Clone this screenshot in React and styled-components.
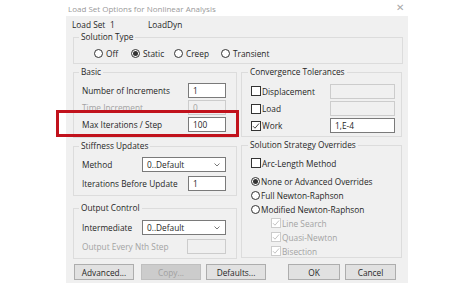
import React from 'react';
import styled, { createGlobalStyle } from 'styled-components';

const GlobalStyle = createGlobalStyle`
  body {
    margin: 0;
    background: #ffffff;
    font-family: "Open Sans", "Noto Sans", sans-serif;
  }
`;

const Page = styled.div`
  position: relative;
  width: 474px;
  height: 283px;
  overflow: hidden;
  background: #ffffff;
`;

const Dialog = styled.div`
  width: 342px;
  margin-left: 66px;
  display: flex;
  flex-direction: column;
`;

const TitleBar = styled.div`
  height: 16px;
  display: flex;
  align-items: center;
  justify-content: space-between;
  padding: 0 4px 0 2px;
  background: #ffffff;
  color: #9a9a9a;
  font-size: 8px;
`;

const Close = styled.span`
  color: #a8a8a8;
  font-size: 10px;
  line-height: 1;
  margin-top: -3px;
`;

const Body = styled.div`
  height: 267px;
  background: #f0f0f0;
  padding: 2px 5px 0 7px;
  box-sizing: border-box;
  font-size: 8.3px;
  color: #262626;
`;

const TopLine = styled.div`
  height: 12px;
  display: grid;
  grid-template-columns: 38px 38px auto;
  align-items: center;
  margin-left: -1px;
`;

const Group = styled.fieldset`
  margin: ${(p) => p.$mt || 0}px 0 0 0;
  padding: 0 ${(p) => p.$pr || 10}px 0 ${(p) => p.$pl || 8}px;
  height: ${(p) => p.$h}px;
  box-sizing: border-box;
  border: 1px solid #dcdcdc;
  min-width: 0;
  display: flex;
  flex-direction: column;
`;

const Legend = styled.legend`
  font-size: 8.3px;
  line-height: 12px;
  padding: 0 2px;
  margin-left: -3px;
  color: #262626;
`;

const RadioLine = styled.div`
  display: flex;
  align-items: center;
  padding: 3px 0 0 12px;
`;

const Option = styled.label`
  display: flex;
  align-items: center;
  gap: ${(p) => p.$gap ?? 1}px;
  width: ${(p) => (p.$w ? `${p.$w}px` : 'auto')};
  height: ${(p) => p.$h || 14}px;
  color: ${(p) => (p.$disabled ? '#a3a3a3' : '#262626')};
  margin-left: ${(p) => p.$indent || 0}px;
  margin-top: ${(p) => p.$mt || 0}px;
`;

const RadioCircle = styled.span`
  width: 9px;
  height: 9px;
  flex: none;
  border-radius: 50%;
  border: 1px solid #333333;
  background: #ffffff;
  box-sizing: border-box;
  display: flex;
  align-items: center;
  justify-content: center;
  &::after {
    content: '';
    width: 5px;
    height: 5px;
    border-radius: 50%;
    background: ${(p) => (p.$on ? '#333333' : 'transparent')};
  }
`;

const Box = styled.span`
  width: 10px;
  height: 10px;
  flex: none;
  border: 1px solid ${(p) => (p.$disabled ? '#cccccc' : '#333333')};
  background: #ffffff;
  box-sizing: border-box;
  display: flex;
  align-items: center;
  justify-content: center;
`;

const Columns = styled.div`
  display: grid;
  grid-template-columns: 164px 161px;
  gap: 4px;
  margin-top: 2px;
`;

const Column = styled.div`
  display: flex;
  flex-direction: column;
`;

const Rows = styled.div`
  display: flex;
  flex-direction: column;
  gap: ${(p) => p.$gap || 0}px;
  padding-top: ${(p) => p.$pt || 4}px;
`;

const Row = styled.div`
  height: ${(p) => p.$h || 17}px;
  display: flex;
  align-items: center;
  justify-content: space-between;
  color: ${(p) => (p.$disabled ? '#a3a3a3' : '#262626')};
`;

const Field = styled.div`
  width: ${(p) => p.$w}px;
  height: 15px;
  box-sizing: border-box;
  border: 1px solid ${(p) => (p.$disabled ? '#cccccc' : '#7a7a7a')};
  background: ${(p) => (p.$disabled ? '#f0f0f0' : '#ffffff')};
  color: ${(p) => (p.$disabled ? '#a3a3a3' : '#262626')};
  display: flex;
  align-items: center;
  padding-left: 4px;
`;

const Select = styled(Field)`
  justify-content: space-between;
  padding-right: 5px;
`;

const Buttons = styled.div`
  display: flex;
  align-items: center;
  margin: 5px 0 0 1px;
`;

const Button = styled.div`
  width: ${(p) => p.$w}px;
  height: 16px;
  margin-left: ${(p) => p.$ml || 0}px;
  box-sizing: border-box;
  border: 1px solid ${(p) => (p.$disabled ? '#bfbfbf' : '#adadad')};
  background: ${(p) => (p.$disabled ? '#cccccc' : '#e1e1e1')};
  color: ${(p) => (p.$disabled ? '#a0a0a0' : '#262626')};
  display: flex;
  align-items: center;
  justify-content: center;
`;

const Highlight = styled.div`
  position: absolute;
  left: 56px;
  top: 110px;
  width: 183px;
  height: 27px;
  box-sizing: border-box;
  border: 3px solid #c1121c;
`;

const Check = ({ color = '#333333' }) => (
  <svg width="8" height="8" viewBox="0 0 8 8">
    <path d="M1 4.2 L3 6.2 L7 1.5" fill="none" stroke={color} strokeWidth="0.9" />
  </svg>
);

const Chevron = () => (
  <svg width="6" height="4" viewBox="0 0 6 4">
    <path d="M0.5 0.5 L3 3 L5.5 0.5" fill="none" stroke="#555555" strokeWidth="0.8" />
  </svg>
);

const Radio = ({ on, label, ...rest }) => (
  <Option {...rest}>
    <RadioCircle $on={on} />
    {label}
  </Option>
);

const CheckOption = ({ checked, disabled, label, ...rest }) => (
  <Option $disabled={disabled} {...rest}>
    <Box $disabled={disabled}>{checked && <Check color={disabled ? '#bbbbbb' : '#333333'} />}</Box>
    {label}
  </Option>
);

export default function App() {
  return (
    <Page>
      <GlobalStyle />
      <Dialog>
        <TitleBar>
          <span>Load Set Options for Nonlinear Analysis</span>
          <Close>✕</Close>
        </TitleBar>
        <Body>
          <TopLine>
            <span>Load Set</span>
            <span>1</span>
            <span>LoadDyn</span>
          </TopLine>
          <Group $h={33} $mt={1}>
            <Legend>Solution Type</Legend>
            <RadioLine>
              <Radio label="Off" $gap={3} $w={37} />
              <Radio on label="Static" $gap={3} $w={43} />
              <Radio label="Creep" $gap={3} $w={47} />
              <Radio label="Transient" $gap={3} />
            </RadioLine>
          </Group>
          <Columns>
            <Column>
              <Group $h={72}>
                <Legend>Basic</Legend>
                <Rows>
                  <Row>
                    Number of Increments
                    <Field $w={38}>1</Field>
                  </Row>
                  <Row $disabled>
                    Time Increment
                    <Field $w={38} $disabled>0</Field>
                  </Row>
                  <Row>
                    Max Iterations / Step
                    <Field $w={38}>100</Field>
                  </Row>
                </Rows>
              </Group>
              <Group $h={56} $mt={2}>
                <Legend>Stiffness Updates</Legend>
                <Rows $gap={2}>
                  <Row>
                    Method
                    <Select $w={84}>
                      0..Default
                      <Chevron />
                    </Select>
                  </Row>
                  <Row>
                    Iterations Before Update
                    <Field $w={38}>1</Field>
                  </Row>
                </Rows>
              </Group>
              <Group $h={57} $mt={6}>
                <Legend>Output Control</Legend>
                <Rows $gap={2} $pt={5}>
                  <Row>
                    Intermediate
                    <Select $w={84}>
                      0..Default
                      <Chevron />
                    </Select>
                  </Row>
                  <Row $disabled>
                    Output Every Nth Step
                    <Field $w={39} $disabled />
                  </Row>
                </Rows>
              </Group>
            </Column>
            <Column>
              <Group $h={71} $pl={9} $pr={6}>
                <Legend>Convergence Tolerances</Legend>
                <Rows>
                  <Row $h={18}>
                    <CheckOption label="Displacement" />
                    <Field $w={65} $disabled />
                  </Row>
                  <Row $h={17}>
                    <CheckOption label="Load" />
                    <Field $w={65} $disabled />
                  </Row>
                  <Row $h={17}>
                    <CheckOption checked label="Work" />
                    <Field $w={65}>1,E-4</Field>
                  </Row>
                </Rows>
              </Group>
              <Group $h={119} $mt={2} $pl={9} $pr={6}>
                <Legend>Solution Strategy Overrides</Legend>
                <Rows $pt={5}>
                  <CheckOption label="Arc-Length Method" />
                  <Radio on label="None or Advanced Overrides" $mt={4} />
                  <Radio label="Full Newton-Raphson" />
                  <Radio label="Modified Newton-Raphson" />
                  <CheckOption checked disabled label="Line Search" $indent={20} />
                  <CheckOption checked disabled label="Quasi-Newton" $indent={20} />
                  <CheckOption checked disabled label="Bisection" $indent={20} />
                </Rows>
              </Group>
            </Column>
          </Columns>
          <Buttons>
            <Button $w={60}>Advanced...</Button>
            <Button $w={60} $ml={7} $disabled>Copy...</Button>
            <Button $w={60} $ml={5}>Defaults...</Button>
            <Button $w={52} $ml={22}>OK</Button>
            <Button $w={51} $ml={5}>Cancel</Button>
          </Buttons>
        </Body>
      </Dialog>
      <Highlight />
    </Page>
  );
}
